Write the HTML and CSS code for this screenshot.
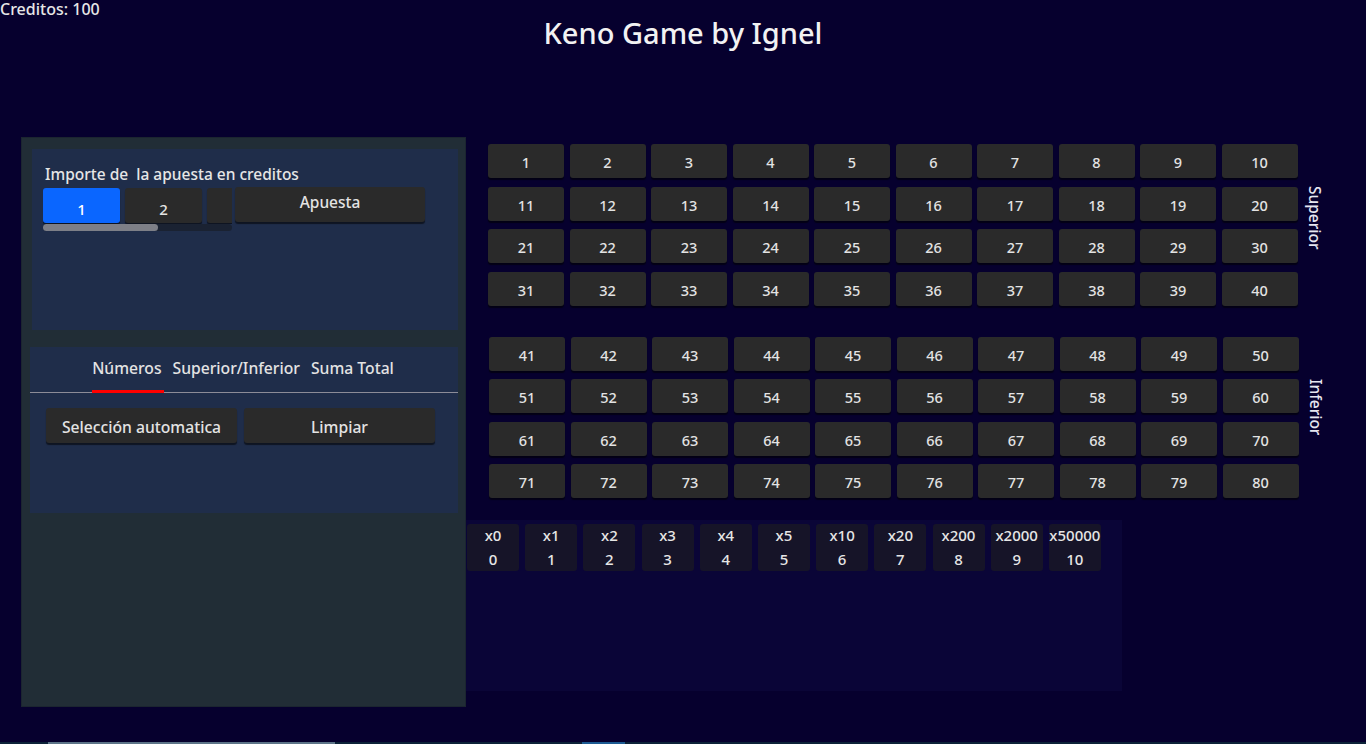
FILE: index.html
```html
<!DOCTYPE html>
<html lang="es">
<head>
    <meta charset="UTF-8">
    <meta name="viewport" content="width=device-width, initial-scale=1.0">
    <title>Keno Game by Ignel</title>
    <link rel="stylesheet" href="styles.css">
</head>
<body>
    <div class="credits">Creditos: <span id="credits">100</span></div>
    <h1 class="title">Keno Game by Ignel</h1>

    <main class="game">
        <!-- Panel izquierdo: apuesta y modos de seleccion -->
        <section class="side-panel">
            <div class="card bet-card">
                <p class="bet-label">Importe de  la apuesta en creditos</p>
                <div class="bet-row">
                    <div class="amounts">
                        <div class="amounts-track">
                            <button class="btn amount active">1</button>
                            <button class="btn amount">2</button>
                            <button class="btn amount" aria-label="5"></button>
                        </div>
                        <div class="scrollbar"><div class="scroll-thumb"></div></div>
                    </div>
                    <button class="btn bet-btn">Apuesta</button>
                </div>
            </div>

            <div class="card mode-card">
                <nav class="tabs">
                    <span class="tab active">Números</span>
                    <span class="tab">Superior/Inferior</span>
                    <span class="tab">Suma Total</span>
                </nav>
                <div class="mode-actions">
                    <button class="btn action">Selección automatica</button>
                    <button class="btn action">Limpiar</button>
                </div>
            </div>
        </section>

        <section class="board-area">
            <div class="board">
                <div class="half">
                    <div class="grid" id="upper"></div>
                    <span class="half-label">Superior</span>
                </div>
                <div class="half lower">
                    <div class="grid" id="lower"></div>
                    <span class="half-label">Inferior</span>
                </div>
            </div>

            <div class="payouts" id="payouts"></div>
        </section>
    </main>

    <div class="bottom-strip">
        <span class="strip-bar"></span>
        <span class="strip-tab"></span>
    </div>

    <script>
        // tablero de 80 numeros, dividido en superior (1-40) e inferior (41-80)
        function fillGrid(id, from, to) {
            const grid = document.getElementById(id);
            for (let n = from; n <= to; n++) {
                const b = document.createElement('button');
                b.className = 'btn cell';
                b.textContent = n;
                grid.appendChild(b);
            }
        }
        fillGrid('upper', 1, 40);
        fillGrid('lower', 41, 80);

        // tabla de pagos: multiplicador por aciertos
        const pays = [0, 1, 2, 3, 4, 5, 10, 20, 200, 2000, 50000];
        const payouts = document.getElementById('payouts');
        pays.forEach((mult, hits) => {
            const cell = document.createElement('div');
            cell.className = 'pay';
            cell.innerHTML = '<span>x' + mult + '</span><span>' + hits + '</span>';
            payouts.appendChild(cell);
        });
    </script>
</body>
</html>
```

FILE: styles.css
```css
html, body {
    margin: 0;
    height: 100%;
}

body {
    font-family: "Noto Sans", "Open Sans", sans-serif;
    font-weight: 500;
    background: #06002e;
    color: #e6e6e6;
    display: flex;
    flex-direction: column;
    min-height: 100vh;
    overflow: hidden;
}

.credits {
    font-size: 16px;
    line-height: 18px;
}

.title {
    margin: 0;
    font-size: 29px;
    font-weight: 500;
    line-height: 29px;
    text-align: center;
    color: #f2f2f2;
}

.game {
    display: flex;
    align-items: flex-start;
    margin-top: 90px;
    padding-left: 21px;
}

/* ---------- panel izquierdo ---------- */

.side-panel {
    width: 445px;
    height: 570px;
    box-sizing: border-box;
    background: #212d36;
    border: 1px solid #1b2530;
    padding: 11px 7px 0 9px;
    display: flex;
    flex-direction: column;
    gap: 17px;
}

.card {
    background: #1f2d4a;
}

.bet-card {
    height: 181px;
    margin-left: 1px;
    padding: 15px 0 0 11px;
    box-sizing: border-box;
}

.bet-label {
    margin: 0 0 3px 2px;
    font-size: 15.5px;
    line-height: 20px;
    white-space: pre;
}

.btn {
    font-family: inherit;
    font-weight: 500;
    color: #e3e3e3;
    background: #2a2a2a;
    border: none;
    border-radius: 3px;
    box-shadow: 0 2px 1px rgba(0, 0, 0, 0.55);
    cursor: pointer;
    padding: 0;
}

.bet-row {
    display: flex;
    align-items: flex-start;
    gap: 3px;
}

.amounts {
    width: 189px;
}

.amounts-track {
    display: flex;
    gap: 5px;
    overflow: hidden;
    height: 37px;
}

.amount {
    flex: 0 0 77px;
    height: 35px;
    margin-top: 1px;
    font-size: 15px;
    padding-top: 6px;
}

.amount.active {
    background: #0a66ff;
    color: #ffffff;
}

.scrollbar {
    height: 7px;
    background: #1a2232;
    border-radius: 4px;
}

.scroll-thumb {
    width: 115px;
    height: 100%;
    background: #7d7f87;
    border-radius: 4px;
}

.bet-btn {
    width: 190px;
    height: 35px;
    font-size: 15.5px;
    padding-bottom: 5px;
}

.mode-card {
    height: 166px;
    margin-left: -1px;
}

.tabs {
    display: flex;
    justify-content: center;
    gap: 9px;
    height: 45px;
    border-bottom: 1px solid #8c8c98;
}

.tab {
    font-size: 15.7px;
    line-height: 42px;
    padding: 0 2px 0 0;
    color: #e3e3e3;
}

.tab.active {
    border-bottom: 3px solid #ff0000;
    margin-bottom: -1px;
}

.mode-actions {
    display: flex;
    gap: 7px;
    padding: 15px 0 0 16px;
}

.action {
    width: 191px;
    height: 35px;
    font-size: 15.7px;
    padding-top: 2px;
}

/* ---------- tablero ---------- */

.board-area {
    display: flex;
    flex-direction: column;
}

.board {
    margin-left: 22px;
    padding-top: 7px;
    display: flex;
    flex-direction: column;
    gap: 31px;
}

.half {
    display: flex;
    gap: 6px;
}

.half.lower {
    margin-left: 1px;
}

.grid {
    display: grid;
    grid-template-columns: repeat(10, 76px);
    grid-auto-rows: 34px;
    column-gap: 5.5px;
    row-gap: 8.5px;
}

.cell {
    font-size: 14.5px;
    padding-top: 2px;
}

.half-label {
    writing-mode: vertical-rl;
    font-size: 15.5px;
    margin-top: 42px;
    color: #e6e6f0;
}

/* ---------- tabla de pagos ---------- */

.payouts {
    width: 656px;
    height: 171px;
    box-sizing: border-box;
    margin-top: 22px;
    background: #0a0537;
    padding: 5px 0 0 1px;
    display: flex;
    align-items: flex-start;
    gap: 6.2px;
}

.pay {
    flex: 0 0 52px;
    height: 47px;
    background: #161428;
    border-radius: 3px;
    display: flex;
    flex-direction: column;
    align-items: center;
    font-size: 15px;
    line-height: 24px;
    margin-top: -1px;
    padding-bottom: 1px;
    box-sizing: border-box;
    white-space: nowrap;
}

.pay span:first-child {
    margin-top: -1px;
}

/* ---------- franja inferior ---------- */

.bottom-strip {
    margin-top: auto;
    height: 2px;
    background: #0c2238;
    position: relative;
}

.strip-bar {
    position: absolute;
    left: 48px;
    width: 287px;
    height: 2px;
    background: #5c7488;
}

.strip-tab {
    position: absolute;
    left: 582px;
    width: 43px;
    height: 2px;
    background: #1c5a92;
}
```
